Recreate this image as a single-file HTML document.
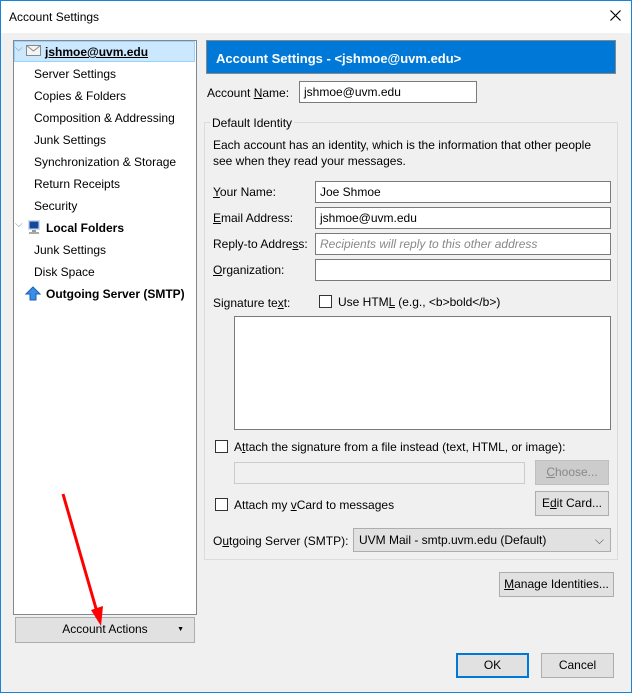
<!DOCTYPE html>
<html><head><style>
*{box-sizing:border-box;margin:0;padding:0}
body{width:632px;height:693px;overflow:hidden;background:#f0f0f0;font-family:"Liberation Sans",sans-serif;font-size:12px;color:#000;position:relative}
.win{position:absolute;left:0;top:0;width:632px;height:693px;background:#f0f0f0}
.frame{position:absolute;left:0;top:0;width:632px;height:693px;border:1px solid #1883d7;pointer-events:none}
.title{position:absolute;left:0;top:0;width:632px;height:33px;background:#fff}
.a{position:absolute;white-space:nowrap}
.inp{position:absolute;background:#fff;border:1px solid #7a7a7a;height:22px;padding:3px 0 0 4px}
.btn{position:absolute;background:#e1e1e1;border:1px solid #adadad;text-align:center;line-height:23px}
.cb{position:absolute;width:13px;height:13px;border:1px solid #333;background:#fff}
u{text-decoration:underline}
</style></head><body>
<div class="win">
<div class="title"></div>
<div class="a" style="left:9px;top:10px;font-size:12px">Account Settings</div>
<svg style="position:absolute;left:610px;top:10px" width="11" height="11"><path d="M0.5 0.5 L10.5 10.5 M10.5 0.5 L0.5 10.5" stroke="#000" stroke-width="1.2"/></svg>

<div style="position:absolute;left:13px;top:40px;width:184px;height:575px;background:#fff;border:1px solid #828790"></div>
<div style="position:absolute;left:14px;top:41px;width:181px;height:21px;background:#cce8ff;border:1px solid #99d1ff"></div>
<div class="a" style="left:15px;top:43px;color:#888;font-size:10px">⌵</div>
<svg style="position:absolute;left:26px;top:45px" width="15" height="11"><rect x="0.5" y="0.5" width="14" height="10" fill="#f4f4f4" stroke="#888"/><path d="M0.5 0.5 L7.5 6 L14.5 0.5" fill="none" stroke="#888"/></svg>
<div class="a" style="left:45px;top:45px;font-weight:bold;text-decoration:underline">jshmoe@uvm.edu</div>
<div class="a" style="left:34px;top:67px">Server Settings</div>
<div class="a" style="left:34px;top:89px">Copies &amp; Folders</div>
<div class="a" style="left:34px;top:111px">Composition &amp; Addressing</div>
<div class="a" style="left:34px;top:133px">Junk Settings</div>
<div class="a" style="left:34px;top:155px">Synchronization &amp; Storage</div>
<div class="a" style="left:34px;top:177px">Return Receipts</div>
<div class="a" style="left:34px;top:199px">Security</div>
<div class="a" style="left:15px;top:219px;color:#888;font-size:10px">⌵</div>
<svg style="position:absolute;left:27px;top:220px" width="14" height="15"><rect x="1" y="0" width="12" height="10" fill="#cde"/><rect x="2.5" y="1.5" width="9" height="7" fill="#1446a0"/><rect x="5" y="10" width="4" height="2" fill="#999"/><rect x="2" y="12" width="10" height="2" fill="#aaa"/></svg>
<div class="a" style="left:46px;top:221px;font-weight:bold">Local Folders</div>
<div class="a" style="left:34px;top:243px">Junk Settings</div>
<div class="a" style="left:34px;top:265px">Disk Space</div>
<svg style="position:absolute;left:25px;top:286px" width="16" height="15"><path d="M8 1 L15 8 L11 8 L11 14 L5 14 L5 8 L1 8 Z" fill="#3a8ee6" stroke="#1a5fb0"/></svg>
<div class="a" style="left:46px;top:287px;font-weight:bold">Outgoing Server (SMTP)</div>

<div class="btn" style="left:15px;top:617px;width:180px;height:26px">Account Actions<span style="position:absolute;right:10px;top:0;font-size:7px">▼</span></div>

<div style="position:absolute;left:206px;top:40px;width:410px;height:34px;background:#0078d7;border:1px solid #888"></div>
<div class="a" style="left:216px;top:51px;color:#fff;font-weight:bold;font-size:13px">Account Settings - &lt;jshmoe@uvm.edu&gt;</div>

<div class="a" style="left:207px;top:86px">Account <u>N</u>ame:</div>
<div class="inp" style="left:299px;top:81px;width:178px">jshmoe@uvm.edu</div>

<div style="position:absolute;left:204px;top:122px;width:414px;height:438px;border:1px solid #dcdcdc"></div>
<div class="a" style="left:210px;top:116px;background:#f0f0f0;padding:0 2px">Default Identity</div>
<div class="a" style="left:213px;top:138px">Each account has an identity, which is the information that other people</div>
<div class="a" style="left:213px;top:154px">see when they read your messages.</div>

<div class="a" style="left:213px;top:185px"><u>Y</u>our Name:</div>
<div class="inp" style="left:315px;top:181px;width:296px">Joe Shmoe</div>
<div class="a" style="left:213px;top:211px"><u>E</u>mail Address:</div>
<div class="inp" style="left:315px;top:207px;width:296px">jshmoe@uvm.edu</div>
<div class="a" style="left:213px;top:237px">Reply-to Addre<u>s</u>s:</div>
<div class="inp" style="left:315px;top:233px;width:296px;color:#888;font-style:italic">Recipients will reply to this other address</div>
<div class="a" style="left:213px;top:263px"><u>O</u>rganization:</div>
<div class="inp" style="left:315px;top:259px;width:296px"></div>

<div class="a" style="left:213px;top:296px">Signature te<u>x</u>t:</div>
<div class="cb" style="left:319px;top:295px"></div>
<div class="a" style="left:338px;top:295px">Use HTM<u>L</u> (e.g., &lt;b&gt;bold&lt;/b&gt;)</div>
<div class="inp" style="left:234px;top:316px;width:377px;height:114px"></div>

<div class="cb" style="left:215px;top:440px"></div>
<div class="a" style="left:234px;top:440px">A<u>t</u>tach the signature from a file instead (text, HTML, or image):</div>
<div class="inp" style="left:234px;top:462px;width:291px;border-color:#ccc;background:#f0f0f0"></div>
<div class="btn" style="left:535px;top:460px;width:74px;height:25px;background:#ccc;border-color:#bfbfbf;color:#888"><u>C</u>hoose...</div>

<div class="cb" style="left:215px;top:498px"></div>
<div class="a" style="left:234px;top:498px">Attach my <u>v</u>Card to messages</div>
<div class="btn" style="left:535px;top:491px;width:74px;height:25px">E<u>d</u>it Card...</div>

<div class="a" style="left:213px;top:534px">O<u>u</u>tgoing Server (SMTP):</div>
<div class="btn" style="left:353px;top:528px;width:258px;height:24px;text-align:left;padding-left:5px;line-height:22px">UVM Mail - smtp.uvm.edu (Default)<span style="position:absolute;right:6px;top:0;color:#555">⌵</span></div>

<div class="btn" style="left:499px;top:572px;width:115px;height:25px"><u>M</u>anage Identities...</div>

<div class="btn" style="left:456px;top:653px;width:73px;height:25px;border:2px solid #0078d7;line-height:21px">OK</div>
<div class="btn" style="left:541px;top:653px;width:73px;height:25px">Cancel</div>

<svg style="position:absolute;left:0;top:0" width="632" height="693"><line x1="63" y1="494" x2="97" y2="612" stroke="#f00" stroke-width="3"/><path d="M91 610 L101 626 L103 606 Z" fill="#f00"/></svg>
</div>
<div class="frame"></div>
</body></html>
